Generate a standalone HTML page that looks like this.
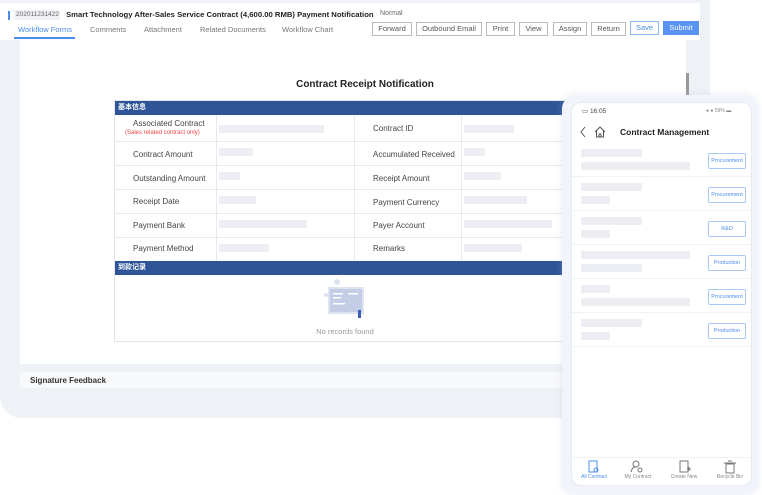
<!DOCTYPE html>
<html><head><meta charset="utf-8"><style>
*{box-sizing:border-box;margin:0;padding:0}
body{width:762px;height:495px;background:#fff;font-family:"Liberation Sans","Noto Sans CJK SC",sans-serif;position:relative;overflow:hidden;color:#333}
.abs{position:absolute}
.bg{left:0;top:0;width:710px;height:418px;background:#eef1f6;border-bottom-left-radius:22px}
.hdr{left:0;top:3px;width:700px;height:37px;background:#fff}
.btn{position:absolute;top:22px;height:14px;border:1px solid #bbb;font-size:7.5px;color:#555;text-align:center;line-height:12px;background:#fff}
.page{left:20px;top:40px;width:666px;height:324px;background:#fff}
.sk{position:absolute;background:#eceef3;height:8px;border-radius:1px}
.tbl{left:114px;top:100px;width:460px;height:242px;border:1px solid #e3e5ea;background:#fff}
.bh{position:absolute;left:0;width:460px;height:14px;background:#2e5597;color:#fff;font-size:7px;font-weight:bold;line-height:14px;padding-left:3px}
.lbl{position:absolute;font-size:8px;color:#444}
.hl{position:absolute;left:0;width:460px;height:1px;background:#e6e8ed}
.vl{position:absolute;top:14px;width:1px;height:146px;background:#e6e8ed}
.tag{position:absolute;left:136px;width:38px;height:16px;border:1px solid #a9c8f5;border-radius:2px;font-size:5.5px;color:#4a8cf0;text-align:center;line-height:14px}
.tab{position:absolute;top:474px;font-size:5px;color:#888;text-align:center;width:40px}
</style></head><body>
<div class="abs bg"></div>
<div class="abs hdr"></div>
<div class="abs" style="left:8px;top:11px;width:2px;height:9px;background:#4a8cf0"></div>
<div class="abs" style="left:14px;top:10px;width:46px;height:10px;background:#f0f1f4;font-size:6.5px;color:#666;line-height:10px;padding-left:2px">202011231422</div>
<div class="abs" style="left:66px;top:10px;font-size:7.7px;font-weight:bold;color:#222;white-space:nowrap">Smart Technology After-Sales Service Contract (4,600.00 RMB) Payment Notification</div>
<div class="abs" style="left:380px;top:10px;font-size:7px;color:#666">Normal</div>
<div class="abs" style="left:18px;top:25px;font-size:7.5px;color:#4a8cf0">Workflow Forms</div>
<div class="abs" style="left:14px;top:37px;width:61px;height:2px;background:#4a8cf0"></div>
<div class="abs" style="left:90px;top:25px;font-size:7.5px;color:#777">Comments</div>
<div class="abs" style="left:144px;top:25px;font-size:7.5px;color:#777">Attachment</div>
<div class="abs" style="left:200px;top:25px;font-size:7.5px;color:#777">Related Documents</div>
<div class="abs" style="left:282px;top:25px;font-size:7.5px;color:#777">Workflow Chart</div>
<div class="btn" style="left:372px;width:40px">Forward</div>
<div class="btn" style="left:416px;width:66px">Outbound Email</div>
<div class="btn" style="left:486px;width:29px">Print</div>
<div class="btn" style="left:519px;width:29px">View</div>
<div class="btn" style="left:553px;width:34px">Assign</div>
<div class="btn" style="left:591px;width:35px">Return</div>
<div class="btn" style="left:630px;width:29px;border-color:#8fb5f5;color:#4a8cf0;top:21px">Save</div>
<div class="btn" style="left:663px;width:36px;background:#5b93f5;border-color:#5b93f5;color:#fff;top:21px">Submit</div>
<div class="abs page"></div>
<div class="abs" style="left:686px;top:73px;width:3px;height:22px;background:#999"></div>
<div class="abs" style="left:0;top:79px;width:762px;text-align:center;font-size:10px;font-weight:bold;color:#222;padding-right:32px">Contract Receipt Notification</div>
<div class="abs tbl">
<div class="bh" style="top:0">基本信息</div>
<div class="vl" style="left:101px"></div><div class="vl" style="left:239px"></div><div class="vl" style="left:346px"></div>
<div class="hl" style="top:40px"></div><div class="hl" style="top:64px"></div><div class="hl" style="top:88px"></div><div class="hl" style="top:112px"></div><div class="hl" style="top:136px"></div>
<div class="lbl" style="left:18px;top:18px">Associated Contract</div>
<div class="lbl" style="left:10px;top:29px;font-size:6px;color:#f04848">(Sales related contract only)</div>
<div class="lbl" style="left:18px;top:49px">Contract Amount</div>
<div class="lbl" style="left:18px;top:73px">Outstanding Amount</div>
<div class="lbl" style="left:18px;top:96px">Receipt Date</div>
<div class="lbl" style="left:18px;top:120px">Payment Bank</div>
<div class="lbl" style="left:18px;top:143px">Payment Method</div>
<div class="lbl" style="left:258px;top:23px">Contract ID</div>
<div class="lbl" style="left:258px;top:49px">Accumulated Received</div>
<div class="lbl" style="left:258px;top:73px">Receipt Amount</div>
<div class="lbl" style="left:258px;top:97px">Payment Currency</div>
<div class="lbl" style="left:258px;top:120px">Payer Account</div>
<div class="lbl" style="left:258px;top:143px">Remarks</div>
<div class="sk" style="left:104px;top:24px;width:105px"></div>
<div class="sk" style="left:104px;top:47px;width:34px"></div>
<div class="sk" style="left:104px;top:71px;width:21px"></div>
<div class="sk" style="left:104px;top:95px;width:37px"></div>
<div class="sk" style="left:104px;top:119px;width:88px"></div>
<div class="sk" style="left:104px;top:143px;width:50px"></div>
<div class="sk" style="left:349px;top:24px;width:50px"></div>
<div class="sk" style="left:349px;top:47px;width:21px"></div>
<div class="sk" style="left:349px;top:71px;width:37px"></div>
<div class="sk" style="left:349px;top:95px;width:63px"></div>
<div class="sk" style="left:349px;top:119px;width:88px"></div>
<div class="sk" style="left:349px;top:143px;width:58px"></div>
<div class="bh" style="top:160px">到款记录</div>
<svg class="abs" style="left:208px;top:178px" width="52" height="44"><circle cx="14" cy="3" r="3" fill="#dde3ef"/><rect x="6" y="9" width="34" height="25" fill="#c3cde6" stroke="#dde3ef" stroke-width="2"/><rect x="10" y="14" width="10" height="1.5" fill="#fff"/><rect x="10" y="18" width="8" height="1.5" fill="#fff"/><rect x="10" y="24" width="12" height="1.5" fill="#fff"/><rect x="25" y="14" width="10" height="1.5" fill="#fff"/><rect x="35" y="31" width="3" height="8" fill="#3a5db8"/><circle cx="3" cy="16" r="2" fill="#dde3ef"/></svg>
<div class="abs" style="left:0;top:226px;width:460px;text-align:center;font-size:7.5px;color:#999">No records found</div>
</div>
<div class="abs" style="left:20px;top:364px;width:560px;height:8px;background:#eef1f6"></div>
<div class="abs" style="left:20px;top:372px;width:560px;height:17px;background:#f8f9fb;border-bottom:1px solid #eceef2;font-size:8px;font-weight:bold;color:#333;padding:4px 0 0 10px">Signature Feedback</div>
<div class="abs" style="left:562px;top:95px;width:196px;height:400px;background:#f1f4fa;border-radius:14px;box-shadow:0 0 8px rgba(180,190,210,.3)"></div>
<div class="abs" style="left:571px;top:102px;width:181px;height:384px;background:#fff;border-radius:10px;border:1px solid #e6eaf2"></div>
<div class="abs" style="left:582px;top:107px;font-size:6.5px;color:#444">▭ 16:05</div>
<div class="abs" style="left:706px;top:108px;font-size:5px;color:#888">● ● 59% ▬</div>
<svg class="abs" style="left:578px;top:125px" width="32" height="14"><path d="M7 2 L3 7 L7 12" stroke="#555" fill="none" stroke-width="1"/><path d="M17 7 L22 2 L27 7 M18.5 6 V12 H25.5 V6 M21 12 V9 H23 V12" stroke="#555" fill="none" stroke-width="1"/></svg>
<div class="abs" style="left:620px;top:127px;font-size:8.5px;font-weight:bold;color:#222">Contract Management</div>
<div class="abs" style="left:572px;top:145px;width:180px;height:210px">
<div class="sk" style="left:9px;top:4px;width:61px;height:8px"></div><div class="sk" style="left:9px;top:17px;width:109px"></div>
<div class="tag" style="top:8px">Procurement</div><div class="hl" style="top:31px;left:0;width:180px;background:#f1f2f5"></div>
<div class="sk" style="left:9px;top:38px;width:61px"></div><div class="sk" style="left:9px;top:51px;width:29px"></div>
<div class="tag" style="top:42px">Procurement</div><div class="hl" style="top:65px;left:0;width:180px;background:#f1f2f5"></div>
<div class="sk" style="left:9px;top:72px;width:61px"></div><div class="sk" style="left:9px;top:85px;width:29px"></div>
<div class="tag" style="top:76px">R&amp;D</div><div class="hl" style="top:99px;left:0;width:180px;background:#f1f2f5"></div>
<div class="sk" style="left:9px;top:106px;width:109px"></div><div class="sk" style="left:9px;top:119px;width:61px"></div>
<div class="tag" style="top:110px">Production</div><div class="hl" style="top:133px;left:0;width:180px;background:#f1f2f5"></div>
<div class="sk" style="left:9px;top:140px;width:29px"></div><div class="sk" style="left:9px;top:153px;width:109px"></div>
<div class="tag" style="top:144px">Procurement</div><div class="hl" style="top:167px;left:0;width:180px;background:#f1f2f5"></div>
<div class="sk" style="left:9px;top:174px;width:61px"></div><div class="sk" style="left:9px;top:187px;width:29px"></div>
<div class="tag" style="top:178px">Production</div><div class="hl" style="top:201px;left:0;width:180px;background:#f1f2f5"></div>
</div>
<div class="abs" style="left:572px;top:457px;width:180px;height:1px;background:#f0f1f4"></div>
<svg class="abs" style="left:585px;top:460px" width="160" height="14" fill="none" stroke-width="1"><rect x="4" y="1" width="8" height="11" stroke="#4a8cf0"/><circle cx="11" cy="10" r="2" stroke="#4a8cf0"/><circle cx="51" cy="4" r="3" stroke="#777"/><path d="M46 12 Q47 7 51 7" stroke="#777"/><circle cx="55" cy="10" r="2" stroke="#777"/><rect x="95" y="1" width="8" height="11" stroke="#777"/><path d="M102 9 H106 M104 7 V11" stroke="#777"/><rect x="141" y="4" width="8" height="9" stroke="#777"/><path d="M139 3 H151 M143 1 H147" stroke="#777"/></svg>
<div class="tab" style="left:574px;color:#4a8cf0">All Contract</div>
<div class="tab" style="left:618px">My Contract</div>
<div class="tab" style="left:664px">Create New</div>
<div class="tab" style="left:710px">Recycle Bin</div>
</body></html>
